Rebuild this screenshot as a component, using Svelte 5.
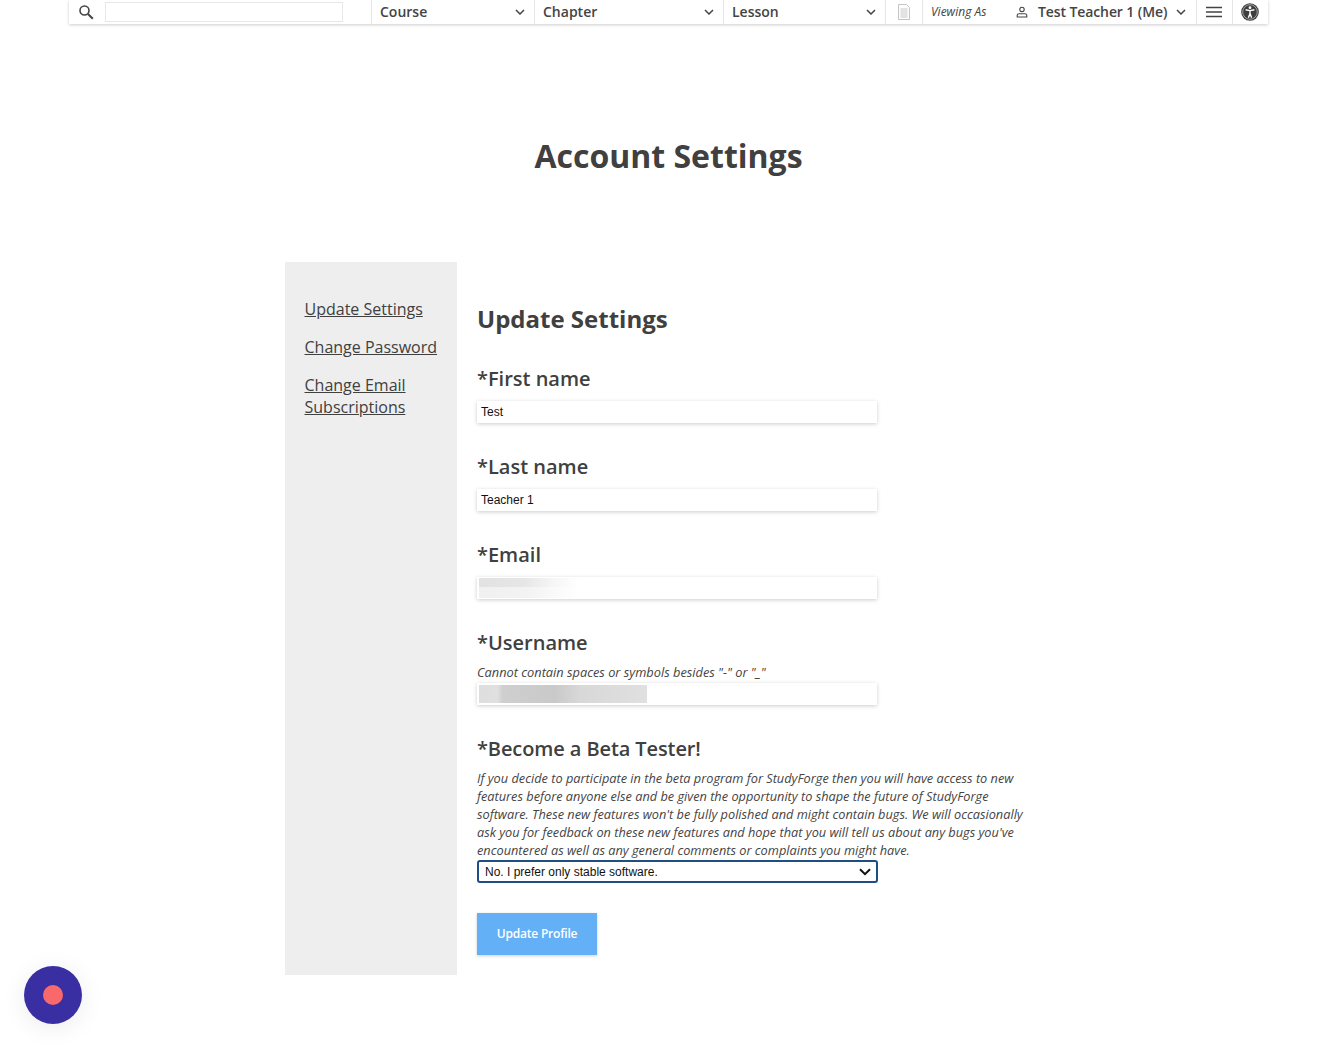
<script>
  const fields = [
    { label: '*First name', value: 'Test' },
    { label: '*Last name', value: 'Teacher 1' },
    { label: '*Email', blur: 'smudge-email' },
    { label: '*Username', hint: 'Cannot contain spaces or symbols besides "-" or "_"', blur: 'smudge-user' }
  ];
  const links = ['Update Settings', 'Change Password', 'Change Email Subscriptions'];
</script>

<div class="page">
  <nav class="nav">
    <div class="cell search">
      <svg class="ic-search" viewBox="0 0 16 16" width="16" height="16"><circle cx="6.5" cy="6.5" r="4.5" fill="none" stroke="#444" stroke-width="1.6"/><path d="M10 10l4.8 4.8" stroke="#444" stroke-width="2" fill="none"/></svg>
      <div class="search-box"></div>
    </div>
    <div class="cell dd course"><span>Course</span><svg class="chev" viewBox="0 0 10 6" width="10" height="6"><path d="M1 1l4 4 4-4" fill="none" stroke="#444" stroke-width="1.5"/></svg></div>
    <div class="cell dd chapter"><span>Chapter</span><svg class="chev" viewBox="0 0 10 6" width="10" height="6"><path d="M1 1l4 4 4-4" fill="none" stroke="#444" stroke-width="1.5"/></svg></div>
    <div class="cell dd lesson"><span>Lesson</span><svg class="chev" viewBox="0 0 10 6" width="10" height="6"><path d="M1 1l4 4 4-4" fill="none" stroke="#444" stroke-width="1.5"/></svg></div>
    <div class="cell doc">
      <svg viewBox="0 0 12 16" width="12" height="16"><path d="M.5.5h8l3 3v12H.5z" fill="#fdfdfd" stroke="#c4c4c4"/><path d="M2.5 5h7M2.5 7h7M2.5 9h7M2.5 11h7M2.5 13h7" stroke="#c8c8c8"/></svg>
    </div>
    <div class="viewing"><em>Viewing As</em></div>
    <div class="cell user">
      <svg viewBox="0 0 12 12" width="12" height="12"><circle cx="6" cy="3.4" r="2.2" fill="none" stroke="#444" stroke-width="1.1"/><path d="M1.2 11V9.4c0-1 1-1.6 2-1.6h5.6c1 0 2 .6 2 1.6V11z" fill="none" stroke="#444" stroke-width="1.1"/></svg>
      <span>Test Teacher 1 (Me)</span>
      <svg class="chev" viewBox="0 0 10 6" width="10" height="6"><path d="M1 1l4 4 4-4" fill="none" stroke="#444" stroke-width="1.5"/></svg>
    </div>
    <div class="cell square">
      <svg viewBox="0 0 16 12" width="16" height="12"><path d="M0 1.5h16M0 6h16M0 10.5h16" stroke="#444" stroke-width="1.5"/></svg>
    </div>
    <div class="cell square">
      <svg viewBox="0 0 18 18" width="18" height="18"><circle cx="9" cy="9" r="8.8" fill="#3d3d3d"/><circle cx="9" cy="9" r="7.3" fill="none" stroke="#e8e8e8" stroke-width=".6"/><circle cx="9" cy="4.7" r="1.4" fill="#fff"/><path d="M4.6 6.8L9 7.6l4.4-.8M9 7.6v3.2M9 10.6l-1.6 4.2M9 10.6l1.6 4.2" fill="none" stroke="#fff" stroke-width="1.4"/></svg>
    </div>
  </nav>

  <h1>Account Settings</h1>

  <div class="panel">
    <aside class="side">
      {#each links as l}
        <a href="#top">{l}</a>
      {/each}
    </aside>
    <main class="content">
      <h2>Update Settings</h2>
      {#each fields as f}
        <div class="group">
          <div class="label">{f.label}</div>
          {#if f.hint}<div class="hint">{f.hint}</div>{/if}
          <div class="input">
            {#if f.value}{f.value}{/if}
            {#if f.blur}<div class="smudge {f.blur}"></div>{/if}
          </div>
        </div>
      {/each}
      <div class="group beta">
        <div class="label">*Become a Beta Tester!</div>
        <div class="hint para">If you decide to participate in the beta program for StudyForge then you will have access to new features before anyone else and be given the opportunity to shape the future of StudyForge software. These new features won't be fully polished and might contain bugs. We will occasionally ask you for feedback on these new features and hope that you will tell us about any bugs you've encountered as well as any general comments or complaints you might have.</div>
        <div class="select">
          <span>No. I prefer only stable software.</span>
          <svg viewBox="0 0 12 8" width="12" height="8"><path d="M1 1.2l5 5 5-5" fill="none" stroke="#111" stroke-width="2"/></svg>
        </div>
      </div>
      <button class="submit">Update Profile</button>
    </main>
  </div>

  <div class="widget"><div class="dot"></div></div>
</div>

<style>
  :global(body) {
    margin: 0;
    background: #fff;
    font-family: "Open Sans", "Noto Sans", sans-serif;
    color: #404040;
  }
  .page {
    height: 1048px;
    overflow: hidden;
  }
  .nav {
    width: 1199px;
    height: 24px;
    margin: 0 0 0 69px;
    display: flex;
    background: #fff;
    box-shadow: 0 1px 3px rgba(0, 0, 0, 0.2);
    font-size: 14px;
    font-weight: 600;
    color: #444;
  }
  .cell {
    display: flex;
    flex: none;
    align-items: center;
    box-sizing: border-box;
    border-right: 1px solid #e6e6e6;
    height: 24px;
  }
  .cell span { margin-top: -2px; }
  .search { width: 303px; padding-left: 9px; }
  .search-box {
    width: 238px;
    height: 20px;
    margin-left: 11px;
    box-sizing: border-box;
    border: 1px solid #e8e8e8;
  }
  .dd { justify-content: space-between; padding: 0 9px 0 8px; }
  .chev { flex: none; }
  .course { width: 163px; }
  .chapter { width: 189px; }
  .lesson { width: 162px; }
  .doc { width: 37px; justify-content: center; }
  .viewing {
    width: 83px;
    flex: none;
    padding-left: 8px;
    box-sizing: border-box;
    font-size: 12px;
    font-weight: 400;
    line-height: 24px;
    color: #444;
  }
  .user { width: 191px; padding-left: 10px; padding-right: 10px; }
  .user span { margin-left: 10px; margin-right: auto; white-space: nowrap; letter-spacing: -0.1px; }
  .square { width: 36px; padding-right: 1px; justify-content: center; }
  .square:last-child { width: 35px; border-right: 0; }

  h1 {
    margin: 111px 0 0;
    height: 42px;
    line-height: 42px;
    text-align: center;
    font-size: 32px;
    font-weight: 700;
    color: #404040;
  }
  .panel {
    display: flex;
    width: 767px;
    height: 713px;
    margin: 85px 0 0 285px;
  }
  .side {
    width: 172px;
    flex: none;
    background: #eee;
    box-sizing: border-box;
    padding: 36px 12px 0 19.5px;
    font-size: 16px;
    line-height: 22px;
  }
  .side a {
    display: block;
    color: #404040;
    text-decoration: underline;
    margin-bottom: 16px;
  }
  .content {
    flex: 1;
    padding: 0 20px;
    min-width: 0;
  }
  h2 {
    margin: 41px 0 0;
    font-size: 24px;
    line-height: 32px;
    font-weight: 700;
    color: #404040;
  }
  .group { margin-top: 30px; }
  .label {
    font-size: 20px;
    font-weight: 600;
    line-height: 28px;
    margin-bottom: 8px;
  }
  .beta .label { letter-spacing: -0.1px; }
  .hint {
    font-size: 12.8px;
    font-style: italic;
    line-height: 18px;
    margin-top: -2px;
    margin-bottom: 2px;
    color: #444;
  }
  .hint.para { font-size: 12.75px; margin-bottom: 1px; width: 550px; }
  .input {
    position: relative;
    width: 400px;
    height: 22px;
    box-sizing: border-box;
    padding-left: 4px;
    font-family: "Liberation Sans", Arial, sans-serif;
    font-size: 12px;
    line-height: 22px;
    color: #111;
    background: #fff;
    box-shadow: 0 1px 4px rgba(0, 0, 0, 0.2);
    overflow: hidden;
  }
  .smudge {
    position: absolute;
    left: 2px;
    top: 2px;
  }
  .smudge-email {
    top: 1px;
    width: 100px;
    height: 20px;
    background:
      linear-gradient(90deg, #e2e2e2, #e6e6e6 45%, #f6f6f6 75%, #fff) top / 100% 9px no-repeat,
      linear-gradient(90deg, #f0f0f0, #f3f3f3 50%, #fbfbfb 80%, #fff) bottom / 100% 11px no-repeat;
  }
  .smudge-user {
    width: 168px;
    height: 18px;
    background: linear-gradient(90deg, #dedede, #e0e0e0 11%, #cfcfcf 14%, #c9c9c9 45%, #d8d8d8 60%, #e0e0e0 100%);
  }
  .select {
    display: flex;
    align-items: center;
    justify-content: space-between;
    width: 401px;
    height: 23px;
    box-sizing: border-box;
    border: 2px solid #1f4e83;
    border-radius: 3px;
    padding: 0 5px 0 6px;
    font-family: "Liberation Sans", Arial, sans-serif;
    font-size: 12px;
    color: #111;
    background: #fff;
  }
  .submit {
    display: block;
    width: 120px;
    height: 42px;
    margin-top: 30px;
    border: 0;
    padding: 0 0 2px;
    background: #63b0f7;
    color: #fff;
    font-family: "Open Sans", sans-serif;
    font-size: 12px;
    font-weight: 600;
    letter-spacing: -0.2px;
    box-shadow: 0 1px 3px rgba(0, 0, 0, 0.2);
  }
  .widget {
    position: fixed;
    left: 24px;
    top: 966px;
    width: 58px;
    height: 58px;
    border-radius: 50%;
    background: #3a2ea3;
    display: flex;
    align-items: center;
    justify-content: center;
    box-shadow: 0 4px 24px rgba(0, 0, 0, 0.08);
  }
  .dot {
    width: 20px;
    height: 20px;
    border-radius: 50%;
    background: #f9686b;
  }
</style>
